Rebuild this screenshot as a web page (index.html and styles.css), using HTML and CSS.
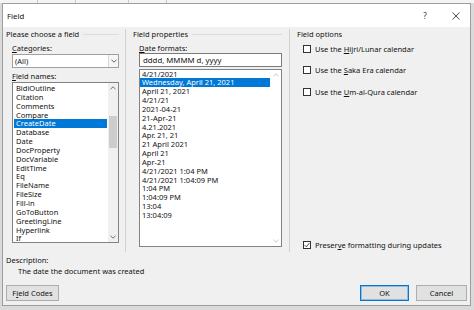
FILE: index.html
```html
<!DOCTYPE html>
<html lang="en">
<head>
  <meta charset="UTF-8">
  <title>Field</title>
  <link rel="stylesheet" href="styles.css">
</head>
<body>

  <div class="backdrop"></div>

  <div class="dialog">
    <div class="titlebar">
      <span class="title">Field</span>
      <span class="title-btn help">?</span>
      <span class="title-btn close">
        <svg width="8" height="8" viewBox="0 0 8 8"><path d="M0.5 0.5 L7.5 7.5 M7.5 0.5 L0.5 7.5" stroke="#222" stroke-width="0.8" fill="none"/></svg>
      </span>
    </div>

    <div class="columns">
      <!-- Left: choose a field -->
      <div class="col col-left">
        <div class="group-title">Please choose a field</div>
        <label class="field-label"><u>C</u>ategories:</label>
        <div class="select">
          <span class="select-value">(All)</span>
          <span class="select-arrow">
            <svg width="6" height="4" viewBox="0 0 6 4"><path d="M0.5 0.8 L3 3.2 L5.5 0.8" stroke="#555" stroke-width="0.9" fill="none"/></svg>
          </span>
        </div>
        <label class="field-label names-label"><u>F</u>ield names:</label>
        <div class="listbox list-names">
          <ul>
            <li>BidiOutline</li>
            <li>Citation</li>
            <li>Comments</li>
            <li>Compare</li>
            <li class="sel">CreateDate</li>
            <li>Database</li>
            <li>Date</li>
            <li>DocProperty</li>
            <li>DocVariable</li>
            <li>EditTime</li>
            <li>Eq</li>
            <li>FileName</li>
            <li>FileSize</li>
            <li>Fill-in</li>
            <li>GoToButton</li>
            <li>GreetingLine</li>
            <li>Hyperlink</li>
            <li>If</li>
          </ul>
          <div class="scrollbar">
            <span class="sb-btn">
              <svg width="6" height="4" viewBox="0 0 6 4"><path d="M0.5 3.2 L3 0.8 L5.5 3.2" stroke="#606060" stroke-width="0.9" fill="none"/></svg>
            </span>
            <span class="sb-track"><span class="sb-thumb"></span></span>
            <span class="sb-btn">
              <svg width="6" height="4" viewBox="0 0 6 4"><path d="M0.5 0.8 L3 3.2 L5.5 0.8" stroke="#606060" stroke-width="0.9" fill="none"/></svg>
            </span>
          </div>
        </div>
      </div>

      <!-- Middle: field properties -->
      <div class="col col-mid">
        <div class="group-title">Field properties</div>
        <label class="field-label"><u>D</u>ate formats:</label>
        <div class="textbox">dddd, MMMM d, yyyy</div>
        <div class="listbox list-formats">
          <ul>
            <li>4/21/2021</li>
            <li class="sel">Wednesday, April 21, 2021</li>
            <li>April 21, 2021</li>
            <li>4/21/21</li>
            <li>2021-04-21</li>
            <li>21-Apr-21</li>
            <li>4.21.2021</li>
            <li>Apr. 21, 21</li>
            <li>21 April 2021</li>
            <li>April 21</li>
            <li>Apr-21</li>
            <li>4/21/2021 1:04 PM</li>
            <li>4/21/2021 1:04:09 PM</li>
            <li>1:04 PM</li>
            <li>1:04:09 PM</li>
            <li>13:04</li>
            <li>13:04:09</li>
          </ul>
          <div class="scrollbar disabled">
            <span class="sb-btn">
              <svg width="6" height="4" viewBox="0 0 6 4"><path d="M0.5 3.2 L3 0.8 L5.5 3.2" stroke="#c4c4c4" stroke-width="0.9" fill="none"/></svg>
            </span>
            <span class="sb-track"></span>
            <span class="sb-btn">
              <svg width="6" height="4" viewBox="0 0 6 4"><path d="M0.5 0.8 L3 3.2 L5.5 0.8" stroke="#c4c4c4" stroke-width="0.9" fill="none"/></svg>
            </span>
          </div>
        </div>
      </div>

      <!-- Right: field options -->
      <div class="col col-right">
        <div class="group-title">Field options</div>
        <div class="check-list">
          <label class="check"><span class="box"></span><span>Use the <u>H</u>ijri/Lunar calendar</span></label>
          <label class="check"><span class="box"></span><span>Use the <u>S</u>aka Era calendar</span></label>
          <label class="check"><span class="box"></span><span>Use the <u>U</u>m-al-Qura calendar</span></label>
        </div>
        <label class="check preserve">
          <span class="box">
            <svg width="6" height="6" viewBox="0 0 6 6"><path d="M0.6 3.1 L2.3 4.8 L5.4 1.1" stroke="#222" stroke-width="0.8" fill="none"/></svg>
          </span><span>Preser<u>v</u>e formatting during updates</span>
        </label>
      </div>
    </div>

    <div class="footer">
      <div class="desc-label">Description:</div>
      <div class="desc-text">The date the document was created</div>
      <div class="buttons">
        <button class="btn btn-codes">F<u>i</u>eld Codes</button>
        <button class="btn btn-ok">OK</button>
        <button class="btn btn-cancel">Cancel</button>
      </div>
    </div>
  </div>

</body>
</html>
```

FILE: styles.css
```css
* {
  box-sizing: border-box;
}
body {
  margin: 0;
  width: 474px;
  height: 310px;
  overflow: hidden;
  font-family: "Noto Sans", sans-serif;
  font-size: 7.5px;
  color: #111;
  background: #dadada;
}
u {
  text-decoration-thickness: 0.6px;
  text-underline-offset: 1px;
}

/* what shows behind the dialog */
.backdrop {
  height: 3px;
  background:
    linear-gradient(90deg, transparent 37px, #c9c9c9 37px, #c9c9c9 38px, transparent 38px,
      transparent 75px, #c9c9c9 75px, #c9c9c9 76px, transparent 76px,
      transparent 128px, #c9c9c9 128px, #c9c9c9 129px, transparent 129px,
      transparent 166px, #c9c9c9 166px, #c9c9c9 167px, transparent 167px),
    #f4f4f4;
}

.dialog {
  margin: 0 3px 0 2px;
  border: 1px solid #9d9d9d;
  background: #f0f0f0;
}

/* title bar */
.titlebar {
  display: flex;
  align-items: center;
  height: 23px;
  padding-left: 4px;
  background: #fff;
}
.title {
  flex: 1;
  font-size: 7.8px;
}
.title-btn {
  display: flex;
  align-items: center;
  justify-content: center;
  height: 23px;
}
.help {
  width: 34px;
  font-size: 8px;
  color: #333;
}
.close {
  width: 28px;
}

/* three columns */
.columns {
  display: flex;
  height: 223px;
  margin-top: 2px;
}
.col {
  display: flex;
  flex-direction: column;
  border-right: 1px solid #d2d2d2;
}
.col-left {
  width: 123px;
  padding: 0 6px 0 9px;
}
.col-mid {
  width: 164px;
  padding: 0 7px 0 13px;
}
.col-right {
  flex: 1;
  padding: 0 0 0 13px;
  border-right: none;
}
.group-title {
  display: flex;
  align-items: center;
  height: 10px;
  margin-left: -6px;
  white-space: nowrap;
}
.group-title::after {
  content: "";
  flex: 1;
  height: 1px;
  margin-left: 4px;
  background: #dcdcdc;
}
.col-right .group-title::after {
  display: none;
}
.field-label {
  display: block;
  height: 10px;
  line-height: 10px;
  margin-top: 4px;
}
.names-label {
  margin-top: 3px;
  margin-bottom: 1px;
}

/* combo box */
.select {
  display: flex;
  align-items: center;
  height: 14px;
  margin-top: 1px;
  padding-left: 2px;
  border: 1px solid #a0a0a0;
  background: #fff;
}
.select-value {
  flex: 1;
}
.select-arrow {
  display: flex;
  align-items: center;
  justify-content: center;
  width: 10px;
  height: 12px;
  border-left: 1px solid #d9d9d9;
  background: #f6f6f6;
}

.textbox {
  height: 14px;
  line-height: 12px;
  padding-left: 3px;
  border: 1px solid #7a7a7a;
  background: #fff;
  font-size: 7.8px;
}

/* list boxes */
.listbox {
  display: flex;
  border: 1px solid #828282;
  background: #fff;
}
.list-names {
  height: 161px;
}
.list-formats {
  height: 178px;
  margin-top: 1.5px;
}
.listbox ul {
  flex: 1;
  margin: 0;
  padding: 1px 1px 0;
  list-style: none;
  overflow: hidden;
}
.list-formats ul {
  padding: 0;
}
.listbox li {
  height: 8.85px;
  line-height: 8.85px;
  padding-left: 2px;
  white-space: nowrap;
}
.listbox li.sel {
  background: #0078d7;
  color: #fff;
}
.scrollbar {
  display: flex;
  flex-direction: column;
  width: 10px;
  background: #f0f0f0;
}
.scrollbar.disabled {
  width: 11px;
  background: #fff;
}
.sb-btn {
  display: flex;
  align-items: center;
  justify-content: center;
  height: 10px;
}
.sb-track {
  flex: 1;
}
.sb-thumb {
  display: block;
  width: 8px;
  height: 32px;
  margin: 23px auto 0;
  background: #cdcdcd;
}

/* check boxes */
.check-list {
  display: flex;
  flex-direction: column;
  gap: 11.4px;
  margin-top: 5px;
}
.check {
  display: flex;
  align-items: center;
  height: 10px;
  white-space: nowrap;
}
.box {
  display: flex;
  align-items: center;
  justify-content: center;
  width: 8px;
  height: 8px;
  margin-right: 4px;
  border: 1px solid #333;
  background: #fff;
}
.preserve {
  margin-top: auto;
  margin-bottom: 2px;
}

/* bottom part */
.footer {
  padding: 3px 3px 4px;
}
.desc-label, .desc-text {
  height: 10px;
  line-height: 10px;
}
.desc-text {
  margin-top: 1px;
  padding-left: 12px;
}
.buttons {
  display: flex;
  margin-top: 9px;
}
.btn {
  height: 16px;
  padding: 0;
  border: 1px solid #adadad;
  background: #e1e1e1;
  font-family: inherit;
  font-size: 7.5px;
  color: #111;
}
.btn-codes {
  width: 53px;
  margin-right: auto;
}
.btn-ok {
  width: 49px;
  margin-right: 7px;
  border-color: #0078d7;
  box-shadow: inset 0 0 0 1px rgba(0, 120, 215, 0.35);
}
.btn-cancel {
  width: 51px;
}
```
